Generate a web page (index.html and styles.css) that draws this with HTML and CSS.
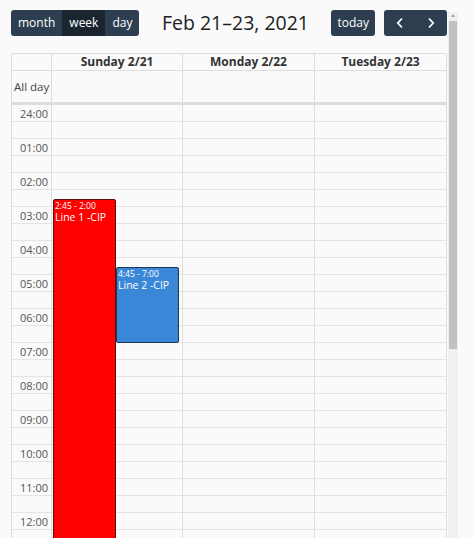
FILE: index.html
```html
<!DOCTYPE html>
<html lang="en">
<head>
<meta charset="utf-8">
<title>Calendar</title>
<link rel="stylesheet" href="styles.css">
</head>
<body>
<div class="page">
  <div class="cal">
    <div class="toolbar">
      <div class="btn-group">
        <button class="btn">month</button>
        <button class="btn active">week</button>
        <button class="btn">day</button>
      </div>
      <h2 class="title">Feb 21–23, 2021</h2>
      <div class="right">
        <button class="btn solo">today</button>
        <div class="btn-group">
          <button class="btn icon" aria-label="prev"><svg width="10" height="12" viewBox="0 0 10 12"><path d="M7 1.5 L2.8 6 L7 10.5" fill="none" stroke="#fff" stroke-width="1.8"/></svg></button>
          <button class="btn icon" aria-label="next"><svg width="10" height="12" viewBox="0 0 10 12"><path d="M3 1.5 L7.2 6 L3 10.5" fill="none" stroke="#fff" stroke-width="1.8"/></svg></button>
        </div>
      </div>
    </div>
    <div class="grid">
      <div class="head">
        <div class="cell axis"></div>
        <div class="cell day">Sunday 2/21</div>
        <div class="cell day">Monday 2/22</div>
        <div class="cell day">Tuesday 2/23</div>
      </div>
      <div class="allday">
        <div class="cell axis">All day</div>
        <div class="cell"></div>
        <div class="cell"></div>
        <div class="cell"></div>
      </div>
      <div class="body">
        <div class="col axis-col">
          <div class="hour">24:00</div>
          <div class="hour">01:00</div>
          <div class="hour">02:00</div>
          <div class="hour">03:00</div>
          <div class="hour">04:00</div>
          <div class="hour">05:00</div>
          <div class="hour">06:00</div>
          <div class="hour">07:00</div>
          <div class="hour">08:00</div>
          <div class="hour">09:00</div>
          <div class="hour">10:00</div>
          <div class="hour">11:00</div>
          <div class="hour">12:00</div>
          <div class="hour"></div>
        </div>
        <div class="col daycol">
          <div class="event red" style="top: 93.5px; height: 700px; left: 1px; width: 63px;">
            <div class="ev-time">2:45 - 2:00</div>
            <div class="ev-title">Line 1 -CIP</div>
          </div>
          <div class="event blue" style="top: 161.5px; height: 76px; left: 64px; width: 63px;">
            <div class="ev-time">4:45 - 7:00</div>
            <div class="ev-title">Line 2 -CIP</div>
          </div>
        </div>
        <div class="col daycol"></div>
        <div class="col daycol"></div>
      </div>
    </div>
  </div>
  <div class="scrollbar">
    <div class="arrow"></div>
    <div class="thumb"></div>
  </div>
</div>
</body>
</html>
```

FILE: styles.css
```css
html, body {
  margin: 0;
  padding: 0;
  height: 538px;
  overflow: hidden;
  background: #fafafa;
  font-family: "Open Sans", "Noto Sans", sans-serif;
  color: #333;
}

.page {
  display: flex;
  height: 538px;
  padding-left: 11px;
  overflow: hidden;
}

.cal {
  width: 436px;
  padding-top: 10px;
  flex: none;
}

.toolbar {
  display: flex;
  align-items: center;
  justify-content: space-between;
  height: 26px;
  margin-bottom: 17px;
}

.btn-group {
  display: flex;
}

.btn {
  font-family: inherit;
  font-size: 12px;
  color: #fff;
  background: #2c3e50;
  border: 0;
  height: 26px;
  padding: 0 7px;
  margin: 0;
  line-height: 26px;
  cursor: pointer;
}

.btn-group .btn {
  border-radius: 0;
}

.btn-group .btn:first-child {
  border-radius: 3px 0 0 3px;
}

.btn-group .btn:last-child {
  border-radius: 0 3px 3px 0;
}

.btn.active {
  background: #1a252f;
}

.btn.solo {
  border-radius: 3px;
  margin-right: 9px;
  padding: 0 6px;
}

.btn.icon {
  width: 31.5px;
  padding: 0;
  display: flex;
  align-items: center;
  justify-content: center;
}

.right {
  display: flex;
  align-items: center;
}

.title {
  margin: 0;
  font-size: 19.5px;
  font-weight: 400;
  color: #1e1e1e;
  line-height: 26px;
}

.grid {
  border-top: 1px solid #ddd;
  border-right: 1px solid #ddd;
}

.head, .allday, .body {
  display: grid;
  grid-template-columns: 40px 131px 132px 132px;
}

.cell {
  border-left: 1px solid #ddd;
  box-sizing: border-box;
}

.head .cell {
  height: 17px;
  border-bottom: 1px solid #ddd;
  font-size: 12px;
  font-weight: 700;
  text-align: center;
  line-height: 16px;
  color: #333;
}

.allday .cell {
  border-bottom: 3px solid #ddd;
  height: 34px;
}

.allday .cell.axis {
  font-size: 11.5px;
  line-height: 31px;
  padding-left: 2px;
  color: #444;
}

.body {
  background-image: repeating-linear-gradient(to bottom, transparent 0, transparent 16px, #e4e4e4 16px, #e4e4e4 17px);
}

.col {
  border-left: 1px solid #ddd;
  box-sizing: border-box;
  position: relative;
}

.hour {
  height: 34px;
  font-size: 11px;
  line-height: 17px;
  text-align: right;
  padding-right: 3px;
  color: #555;
  box-sizing: border-box;
}

.event {
  position: absolute;
  box-sizing: border-box;
  border: 1px solid #2a2a2a;
  border-radius: 2px;
  color: #fff;
  padding: 0 1px;
  overflow: hidden;
}

.event.red {
  background: #ff0000;
  border-color: #5a1010;
}

.event.blue {
  background: #3a87d8;
  border-color: #1f3550;
}

.ev-time {
  font-size: 8.5px;
  line-height: 11px;
}

.ev-title {
  font-size: 10.5px;
  line-height: 12px;
}

.scrollbar {
  width: 10px;
  margin-top: 12px;
  margin-left: 1px;
  height: 526px;
  background: #f0f0f0;
  flex: none;
  display: flex;
  flex-direction: column;
  align-items: center;
}

.arrow {
  width: 0;
  height: 0;
  margin-top: 2px;
  border-left: 2.5px solid transparent;
  border-right: 2.5px solid transparent;
  border-bottom: 3px solid #a3a3a3;
}

.thumb {
  width: 8px;
  margin-top: 4px;
  height: 328px;
  background: #c1c1c1;
}
```
